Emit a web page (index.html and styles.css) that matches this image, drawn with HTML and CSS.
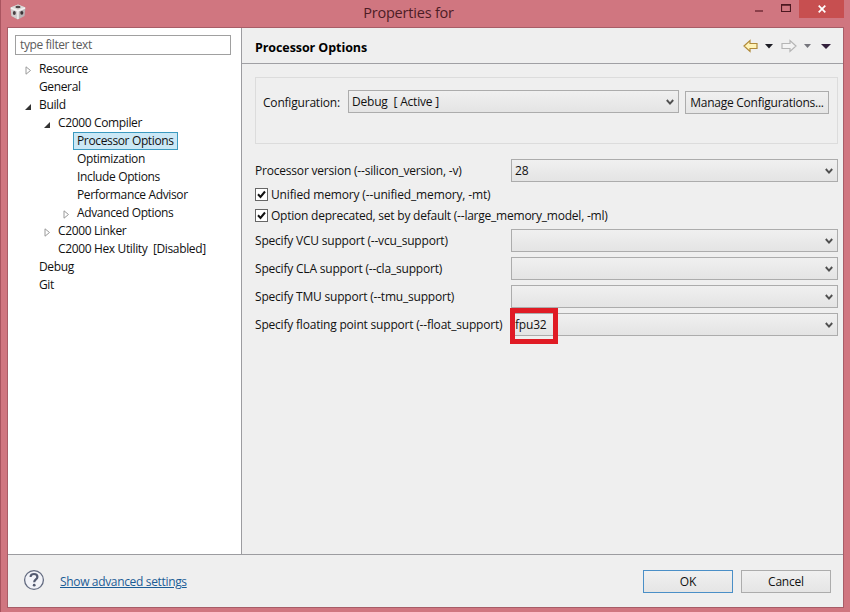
FILE: index.html
```html
<!DOCTYPE html>
<html lang="en">
<head>
    <meta charset="utf-8">
    <title>Properties</title>
    <link rel="stylesheet" href="styles.css">
</head>
<body>

<div class="window">
    <div class="titlebar">
        <svg class="app-icon" width="18" height="18" viewBox="0 0 18 18">
            <path d="M1.5 4.5 L9 1.5 L16.5 4.5 L15.5 13 L9 16.5 L2.5 13 Z" fill="#b9b3b5"/>
            <path d="M1.5 4.5 L9 1.5 L16.5 4.5 L9 8 Z" fill="#dedada"/>
            <path d="M1.5 4.5 L9 8 L9 16.5 L2.5 13 Z" fill="#d3cecf"/>
            <ellipse cx="9" cy="4" rx="2.6" ry="1.2" fill="#514649"/>
            <ellipse cx="5.3" cy="10" rx="1.5" ry="1.9" fill="#4a4043"/>
            <ellipse cx="12.8" cy="9.8" rx="1.5" ry="1.9" fill="#3a3235"/>
            <path d="M2 5 L9 8 L16 5 M9 8 V16" fill="none" stroke="#f5f3f3" stroke-width="1.4"/>
        </svg>
        <div class="title">Properties for</div>
        <div class="controls">
            <svg width="8" height="18" viewBox="0 0 8 18"><path d="M0 11 H8" stroke="#8b3f4a" stroke-width="2"/></svg>
            <svg width="10" height="18" viewBox="0 0 10 18"><path d="M0.5 4.5 H9.5 V11.5 H0.5 Z M0 5.2 H10" fill="none" stroke="#4c1820" stroke-width="1.2"/></svg>
            <div class="close">
                <svg width="8" height="8" viewBox="0 0 8 8"><path d="M0.7 0.7 L7.3 7.3 M7.3 0.7 L0.7 7.3" stroke="#fff" stroke-width="1.7"/></svg>
            </div>
        </div>
    </div>

    <div class="dialog">
        <div class="main">
            <!-- navigation tree -->
            <div class="sidebar">
                <div class="filter">type filter text</div>
                <div class="tree">
                    <div class="node closed"><svg class="arrow" viewBox="0 0 7 9"><path d="M1 0.8 L5.5 4.5 L1 8.2 Z"/></svg><span>Resource</span></div>
                    <div class="node"><span>General</span></div>
                    <div class="node open"><svg class="arrow" viewBox="0 0 7 9"><path d="M6 2 V8 H0 Z"/></svg><span>Build</span></div>
                    <div class="node level2 open"><svg class="arrow" viewBox="0 0 7 9"><path d="M6 2 V8 H0 Z"/></svg><span>C2000 Compiler</span></div>
                    <div class="node level3"><span class="selected">Processor Options</span></div>
                    <div class="node level3"><span>Optimization</span></div>
                    <div class="node level3"><span>Include Options</span></div>
                    <div class="node level3"><span>Performance Advisor</span></div>
                    <div class="node level3 closed"><svg class="arrow" viewBox="0 0 7 9"><path d="M1 0.8 L5.5 4.5 L1 8.2 Z"/></svg><span>Advanced Options</span></div>
                    <div class="node level2 closed"><svg class="arrow" viewBox="0 0 7 9"><path d="M1 0.8 L5.5 4.5 L1 8.2 Z"/></svg><span>C2000 Linker</span></div>
                    <div class="node level2"><span>C2000 Hex Utility&nbsp; [Disabled]</span></div>
                    <div class="node"><span>Debug</span></div>
                    <div class="node"><span>Git</span></div>
                </div>
            </div>

            <div class="page">
                <div class="page-header">
                    <h1>Processor Options</h1>
                    <svg width="90" height="14" viewBox="0 0 90 14">
                        <path d="M1 7 L7 1.5 V4.5 H14 V9.5 H7 V12.5 Z" fill="#fff3b8" stroke="#b08a3a" stroke-width="1.2"/>
                        <path d="M22 5 H30 L26 9.5 Z" fill="#1c1c24"/>
                        <path d="M53 7 L47 1.5 V4.5 H39 V9.5 H47 V12.5 Z" fill="#f3f3f3" stroke="#b5b5b5" stroke-width="1.2"/>
                        <path d="M61 5 H68 L64.5 9 Z" fill="#75757c"/>
                        <path d="M78 5 H88 L83 10 Z" fill="#33203c"/>
                    </svg>
                </div>

                <div class="config">
                    <label>Configuration:</label>
                    <div class="select"><span>Debug&nbsp; [ Active ]</span><svg class="chevron" viewBox="0 0 8 7"><path d="M0.8 1 L4 4.6 L7.2 1"/></svg></div>
                    <div class="button manage">Manage Configurations...</div>
                </div>

                <div class="options">
                    <div class="row">
                        <label>Processor version (--silicon_version, -v)</label>
                        <div class="select"><span>28</span><svg class="chevron" viewBox="0 0 8 7"><path d="M0.8 1 L4 4.6 L7.2 1"/></svg></div>
                    </div>
                    <div class="check">
                        <svg width="13" height="13" viewBox="0 0 13 13"><rect x="0.5" y="0.5" width="12" height="12" fill="#fff" stroke="#666"/><path d="M3 6.3 L5.5 9 L10 3.5" fill="none" stroke="#111" stroke-width="2"/></svg>
                        <label>Unified memory (--unified_memory, -mt)</label>
                    </div>
                    <div class="check">
                        <svg width="13" height="13" viewBox="0 0 13 13"><rect x="0.5" y="0.5" width="12" height="12" fill="#fff" stroke="#666"/><path d="M3 6.3 L5.5 9 L10 3.5" fill="none" stroke="#111" stroke-width="2"/></svg>
                        <label class="long">Option deprecated, set by default (--large_memory_model, -ml)</label>
                    </div>
                    <div class="row">
                        <label>Specify VCU support (--vcu_support)</label>
                        <div class="select"><svg class="chevron" viewBox="0 0 8 7"><path d="M0.8 1 L4 4.6 L7.2 1"/></svg></div>
                    </div>
                    <div class="row">
                        <label>Specify CLA support (--cla_support)</label>
                        <div class="select"><svg class="chevron" viewBox="0 0 8 7"><path d="M0.8 1 L4 4.6 L7.2 1"/></svg></div>
                    </div>
                    <div class="row">
                        <label>Specify TMU support (--tmu_support)</label>
                        <div class="select"><svg class="chevron" viewBox="0 0 8 7"><path d="M0.8 1 L4 4.6 L7.2 1"/></svg></div>
                    </div>
                    <div class="row">
                        <label>Specify floating point support (--float_support)</label>
                        <div class="select"><span>fpu32</span><svg class="chevron" viewBox="0 0 8 7"><path d="M0.8 1 L4 4.6 L7.2 1"/></svg><div class="highlight"></div></div>
                    </div>
                </div>
            </div>
        </div>

        <div class="footer">
            <svg class="help" width="22" height="22" viewBox="0 0 22 22">
                <circle cx="11" cy="11" r="9.4" fill="#f2f3f8" stroke="#636b80" stroke-width="1.3"/>
                <path d="M7.6 8 C7.6 3.9 14.4 4.1 14.4 8 C14.4 10.4 11.2 10.4 11.2 13.2" fill="none" stroke="#535a70" stroke-width="2.2"/>
                <circle cx="11.2" cy="16.2" r="1.4" fill="#535a70"/>
            </svg>
            <a class="link" href="#">Show advanced settings</a>
            <div class="button ok">OK</div>
            <div class="button cancel">Cancel</div>
        </div>
    </div>
</div>

</body>
</html>
```
FILE: styles.css
```css
* {
    box-sizing: border-box;
}

body {
    margin: 0;
    font-family: "Open Sans", "Noto Sans", sans-serif;
    font-size: 12px;
    letter-spacing: -0.2px;
    color: #111;
    overflow: hidden;
}

.window {
    display: flex;
    flex-direction: column;
    width: 850px;
    height: 612px;
    padding: 0 6px 4px 6px;
    background: #d07680;
    border-left: 1px solid #a9545f;
}

/* title bar */
.titlebar {
    display: grid;
    grid-template-columns: 93px 1fr 127px;
    flex: none;
    height: 27px;
}

.app-icon {
    margin: 3px 0 0 2px;
}

.title {
    padding-top: 3px;
    font-size: 14.5px;
    line-height: 20px;
    text-align: center;
    letter-spacing: -0.2px;
    color: #4d1c25;
}

.controls {
    display: flex;
    justify-content: flex-end;
    gap: 18px;
}

.close {
    display: flex;
    align-items: center;
    justify-content: center;
    width: 45px;
    height: 18px;
    margin-left: -10px;
    background: #c74f50;
}

.dialog {
    display: flex;
    flex-direction: column;
    flex: 1;
    background: #efefef;
    border: 1px solid #a85d67;
}

.main {
    display: flex;
    height: 527px;
    border-bottom: 1px solid #9c9ca0;
}

/* left side */
.sidebar {
    width: 234px;
    padding: 7px;
    background: #fff;
    border-right: 1px solid #9c9ca0;
}

.filter {
    width: 216px;
    height: 20px;
    padding-left: 4px;
    border: 1px solid #a0a0a0;
    line-height: 18px;
    letter-spacing: -0.4px;
    color: #5c5c5c;
}

.tree {
    padding-top: 5px;
    letter-spacing: -0.36px;
}

.node {
    display: flex;
    align-items: center;
    position: relative;
    height: 18px;
    padding-left: 24px;
    line-height: 16px;
    white-space: nowrap;
}

.level2 {
    padding-left: 43px;
}

.level3 {
    padding-left: 62px;
}

.arrow {
    width: 7px;
    height: 9px;
    margin: 2px 7px 0 -14px;
}

.closed .arrow path {
    fill: #fff;
    stroke: #9a9a9a;
}

.open .arrow path {
    fill: #333;
}

.selected {
    height: 18px;
    margin-left: -4px;
    padding: 0 3px;
    background: #cbe8f6;
    border: 1px solid #3b9ac0;
}

/* right side */
.page {
    flex: 1;
}

.page-header {
    display: flex;
    align-items: center;
    justify-content: space-between;
    height: 36px;
    padding: 0 10px 0 13px;
    border-bottom: 1px solid #a0a0a4;
}

h1 {
    margin: 3px 0 0 0;
    font-size: 12.5px;
    letter-spacing: -0.08px;
    color: #000;
}

.config {
    display: flex;
    height: 67px;
    margin: 13px 5px 0 13px;
    padding: 12px 8px 0 7px;
    border: 1px solid #dcdcdc;
}

.config label {
    width: 85px;
    line-height: 25px;
}

.config .select {
    width: 331px;
}

.select {
    display: flex;
    align-items: center;
    justify-content: flex-end;
    position: relative;
    height: 23px;
    padding: 0 4px 0 3px;
    background: linear-gradient(#f0f0f0, #e4e4e4);
    border: 1px solid #acacac;
}

.select span {
    flex: 1;
}

.chevron {
    width: 8px;
    height: 7px;
    margin-top: 2px;
    fill: none;
    stroke: #505050;
    stroke-width: 1.9;
}

.button {
    height: 23px;
    background: linear-gradient(#f0f0f0, #e5e5e5);
    border: 1px solid #acacac;
    line-height: 21px;
    text-align: center;
    white-space: nowrap;
}

.manage {
    width: 144px;
    margin: 1px 0 0 6px;
    letter-spacing: -0.25px;
}

.options {
    padding: 15px 5px 0 13px;
}

.row {
    display: grid;
    grid-template-columns: 256px 327px;
    align-items: center;
    height: 23px;
    margin-bottom: 5px;
    white-space: nowrap;
}

.check {
    display: flex;
    align-items: center;
    gap: 3px;
    height: 21px;
    letter-spacing: -0.15px;
}

.check .long {
    letter-spacing: -0.23px;
}

.row + .check {
    margin-top: -3px;
}

.check + .row {
    margin-top: 3px;
}

.highlight {
    position: absolute;
    left: -2px;
    top: -6px;
    width: 48px;
    height: 36px;
    border: 5px solid #e01b24;
}

/* bottom bar */
.footer {
    display: flex;
    align-items: flex-start;
    height: 52px;
    padding: 15px 12px 0 15px;
}

.help {
    margin-top: -1px;
}

.link {
    flex: 1;
    padding-left: 15px;
    line-height: 23px;
    letter-spacing: -0.34px;
    color: #1b5c96;
}

.ok {
    width: 90px;
    border-color: #4a8fc7;
}

.cancel {
    width: 90px;
    margin-left: 8px;
}
```
